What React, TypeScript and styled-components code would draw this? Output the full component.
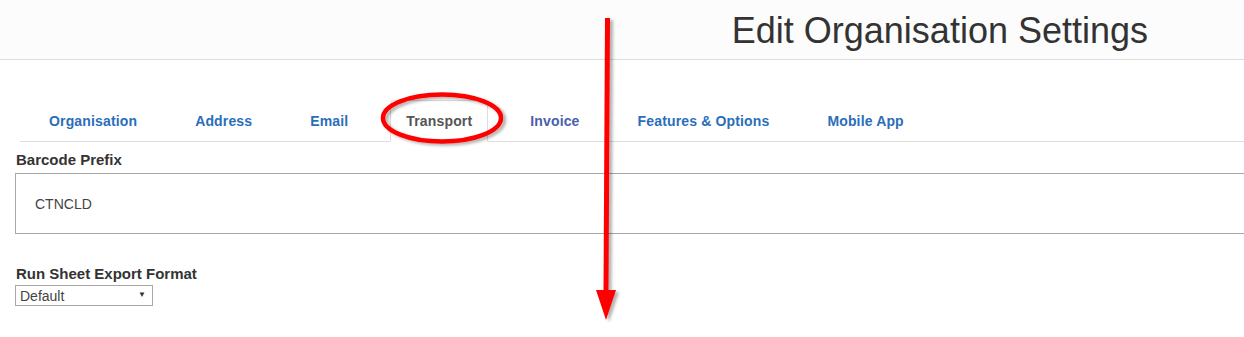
import React from 'react'
import styled, { createGlobalStyle } from 'styled-components'

const GlobalStyle = createGlobalStyle`
  html, body {
    margin: 0;
    padding: 0;
    background: #ffffff;
    font-family: "Liberation Sans", Arial, sans-serif;
    color: #333333;
  }
`

const tabs = [
  { label: 'Organisation' },
  { label: 'Address' },
  { label: 'Email' },
  { label: 'Transport', active: true },
  { label: 'Invoice', visited: true },
  { label: 'Features & Options' },
  { label: 'Mobile App' },
]

const App = () => {
  return (
    <>
      <GlobalStyle />
      <Page>
        <Header>
          <Title>Edit Organisation Settings</Title>
        </Header>
        <Content>
          <Tabs>
            {tabs.map((t) => (
              <Tab key={t.label} $active={t.active}>
                <TabLink href="#" $active={t.active} $visited={t.visited}>
                  {t.label}
                </TabLink>
              </Tab>
            ))}
          </Tabs>
          <Field $gap={8}>
            <Label $below={3}>Barcode Prefix</Label>
            <TextInput type="text" defaultValue="CTNCLD" />
          </Field>
          <Field $gap={30}>
            <Label $below={1}>Run Sheet Export Format</Label>
            <SelectWrap>
              <Select defaultValue="Default">
                <option>Default</option>
              </Select>
            </SelectWrap>
          </Field>
        </Content>
        <Annotation width="1244" height="337" viewBox="0 0 1244 337">
          <defs>
            <filter id="shadow" x="-20%" y="-20%" width="140%" height="140%">
              <feDropShadow dx="3" dy="2" stdDeviation="1.5" floodColor="#000" floodOpacity="0.3" />
            </filter>
          </defs>
          <g filter="url(#shadow)">
            <ellipse cx="442" cy="118" rx="59" ry="23.5" fill="none" stroke="#ff0000" strokeWidth="4.5" />
            <polygon points="605,18 610,18 608.5,291 603.5,291" fill="#ff0000" />
            <polygon points="596,290 616,290 606,320" fill="#ff0000" />
          </g>
        </Annotation>
      </Page>
    </>
  )
}

export default App

const Page = styled.div`
  position: relative;
  width: 1244px;
  height: 337px;
  overflow: hidden;
`

const Header = styled.div`
  display: flex;
  justify-content: flex-end;
  align-items: center;
  height: 59px;
  background: #fcfcfc;
  border-bottom: 1px solid #dddddd;
  padding-right: 96px;
`

const Title = styled.h1`
  margin: 0;
  font-size: 36px;
  font-weight: normal;
  line-height: 40px;
  color: #333333;
  position: relative;
  top: 1px;
`

const Content = styled.div`
  padding: 40px 0 0 15px;
`

const Tabs = styled.ul`
  display: flex;
  list-style: none;
  margin: 0 0 0 5px;
  padding: 0;
  border-bottom: 1px solid #dddddd;
`

const Tab = styled.li<{ $active?: boolean }>`
  margin: 0 13px -1px 13px;
  background: ${(p) => (p.$active ? '#ffffff' : 'transparent')};
  border: 1px solid ${(p) => (p.$active ? '#dddddd' : 'transparent')};
  border-bottom-color: ${(p) => (p.$active ? '#ffffff' : 'transparent')};
  border-radius: 4px 4px 0 0;
`

const TabLink = styled.a<{ $active?: boolean; $visited?: boolean }>`
  display: block;
  padding: 10px 15px;
  line-height: 20px;
  font-size: 14px;
  font-weight: bold;
  letter-spacing: 0.15px;
  text-decoration: none;
  color: ${(p) => (p.$active ? '#555555' : p.$visited ? '#4a60ab' : '#2a6ebb')};
`

const Field = styled.div<{ $gap: number }>`
  display: flex;
  flex-direction: column;
  align-items: flex-start;
  margin-top: ${(p) => p.$gap}px;
`

const Label = styled.label<{ $below: number }>`
  font-size: 15px;
  font-weight: bold;
  line-height: 20px;
  color: #333333;
  margin: 0 0 ${(p) => p.$below}px 1px;
`

const TextInput = styled.input`
  box-sizing: border-box;
  width: 1240px;
  height: 61px;
  margin: 0;
  padding: 0 0 0 19px;
  border: 1px solid #a9a9a9;
  border-radius: 0;
  font-family: "Liberation Sans", Arial, sans-serif;
  font-size: 14px;
  color: #444444;
  outline: none;
`

const SelectWrap = styled.span`
  position: relative;
  display: inline-block;

  &::after {
    content: '▼';
    position: absolute;
    right: 7px;
    top: 5px;
    font-size: 8px;
    line-height: 10px;
    color: #333333;
    pointer-events: none;
  }
`

const Select = styled.select`
  appearance: none;
  box-sizing: border-box;
  width: 138px;
  height: 21px;
  margin: 0;
  padding: 0 0 0 4px;
  border: 1px solid #a9a9a9;
  border-radius: 0;
  background: #ffffff;
  font-family: "Liberation Sans", Arial, sans-serif;
  font-size: 14px;
  color: #444444;
`

const Annotation = styled.svg`
  position: absolute;
  left: 0;
  top: 0;
  pointer-events: none;
`
